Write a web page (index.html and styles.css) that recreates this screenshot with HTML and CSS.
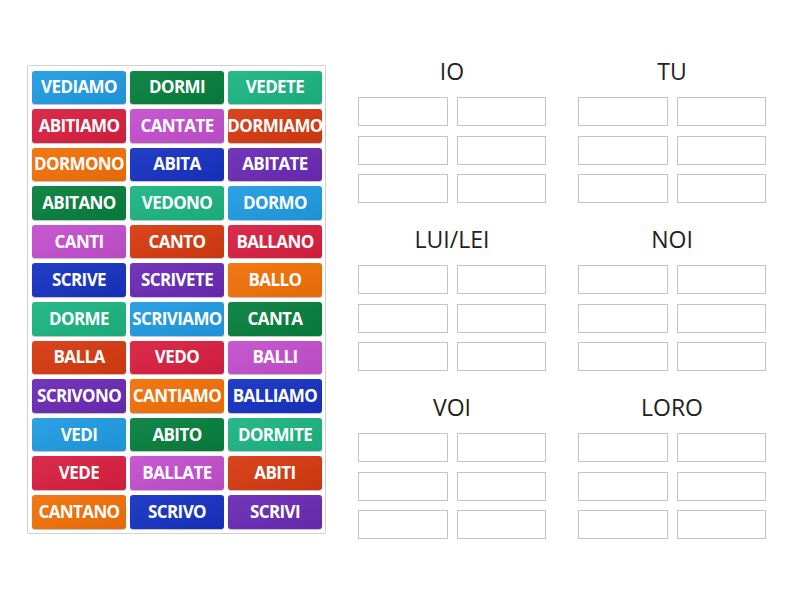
FILE: index.html
```html
<!DOCTYPE html>
<html lang="it">

<head>
    <meta charset="UTF-8">
    <meta name="viewport" content="width=device-width, initial-scale=1.0">
    <title>Raggruppa i verbi</title>
    <link rel="stylesheet" href="styles.css">
</head>

<body>

    <main class="activity">

        <!-- Word bank -->
        <section class="word-bank">
            <div class="tile blue">VEDIAMO</div>
            <div class="tile green">DORMI</div>
            <div class="tile teal">VEDETE</div>

            <div class="tile red">ABITIAMO</div>
            <div class="tile orchid">CANTATE</div>
            <div class="tile rust">DORMIAMO</div>

            <div class="tile orange">DORMONO</div>
            <div class="tile royal">ABITA</div>
            <div class="tile purple">ABITATE</div>

            <div class="tile green">ABITANO</div>
            <div class="tile teal">VEDONO</div>
            <div class="tile blue">DORMO</div>

            <div class="tile orchid">CANTI</div>
            <div class="tile rust">CANTO</div>
            <div class="tile red">BALLANO</div>

            <div class="tile royal">SCRIVE</div>
            <div class="tile purple">SCRIVETE</div>
            <div class="tile orange">BALLO</div>

            <div class="tile teal">DORME</div>
            <div class="tile blue">SCRIVIAMO</div>
            <div class="tile green">CANTA</div>

            <div class="tile rust">BALLA</div>
            <div class="tile red">VEDO</div>
            <div class="tile orchid">BALLI</div>

            <div class="tile purple">SCRIVONO</div>
            <div class="tile orange">CANTIAMO</div>
            <div class="tile royal">BALLIAMO</div>

            <div class="tile blue">VEDI</div>
            <div class="tile green">ABITO</div>
            <div class="tile teal">DORMITE</div>

            <div class="tile red">VEDE</div>
            <div class="tile orchid">BALLATE</div>
            <div class="tile rust">ABITI</div>

            <div class="tile orange">CANTANO</div>
            <div class="tile royal">SCRIVO</div>
            <div class="tile purple">SCRIVI</div>
        </section>

        <!-- Groups -->
        <section class="groups">
            <div class="group">
                <h2>IO</h2>
                <div class="slots">
                    <div class="slot"></div><div class="slot"></div>
                    <div class="slot"></div><div class="slot"></div>
                    <div class="slot"></div><div class="slot"></div>
                </div>
            </div>
            <div class="group">
                <h2>TU</h2>
                <div class="slots">
                    <div class="slot"></div><div class="slot"></div>
                    <div class="slot"></div><div class="slot"></div>
                    <div class="slot"></div><div class="slot"></div>
                </div>
            </div>
            <div class="group">
                <h2>LUI/LEI</h2>
                <div class="slots">
                    <div class="slot"></div><div class="slot"></div>
                    <div class="slot"></div><div class="slot"></div>
                    <div class="slot"></div><div class="slot"></div>
                </div>
            </div>
            <div class="group">
                <h2>NOI</h2>
                <div class="slots">
                    <div class="slot"></div><div class="slot"></div>
                    <div class="slot"></div><div class="slot"></div>
                    <div class="slot"></div><div class="slot"></div>
                </div>
            </div>
            <div class="group">
                <h2>VOI</h2>
                <div class="slots">
                    <div class="slot"></div><div class="slot"></div>
                    <div class="slot"></div><div class="slot"></div>
                    <div class="slot"></div><div class="slot"></div>
                </div>
            </div>
            <div class="group">
                <h2>LORO</h2>
                <div class="slots">
                    <div class="slot"></div><div class="slot"></div>
                    <div class="slot"></div><div class="slot"></div>
                    <div class="slot"></div><div class="slot"></div>
                </div>
            </div>
        </section>

    </main>

</body>

</html>
```

FILE: styles.css
```css
/* General Reset */
* {
    margin: 0;
    padding: 0;
    box-sizing: border-box;
}

body {
    background-color: #fff;
    color: #222;
    font-family: "Open Sans", "Liberation Sans", sans-serif;
}

/* Page layout */
.activity {
    display: flex;
    align-items: flex-start;
    gap: 32px;
    padding: 57px 0 0 27px;
}

/* Word bank */
.word-bank {
    margin-top: 8px;
    display: grid;
    grid-template-columns: repeat(3, 94px);
    grid-auto-rows: 33.6px;
    gap: 5px 4px;
    padding: 4.5px 3px 4.5px 4px;
    border: 1px solid #d0d0d0;
    border-radius: 2px;
}

.tile {
    display: flex;
    align-items: center;
    justify-content: center;
    padding-bottom: 1px;
    white-space: nowrap;
    color: #fff;
    font-size: 17px;
    font-weight: bold;
    letter-spacing: -0.6px;
    border-radius: 3px;
    box-shadow: 0 1px 1px rgba(0, 0, 0, 0.25);
    background-image: linear-gradient(160deg, rgba(255, 255, 255, 0.06), rgba(0, 0, 0, 0.06));
}

.blue   { background-color: #1f9be2; }
.green  { background-color: #067f3d; }
.teal   { background-color: #1cb582; }
.red    { background-color: #d91f40; }
.orchid { background-color: #c34fce; }
.rust   { background-color: #d63a10; }
.orange { background-color: #f27007; }
.royal  { background-color: #1632c2; }
.purple { background-color: #6a2bb5; }

/* Groups */
.groups {
    display: grid;
    grid-template-columns: repeat(2, 188px);
    column-gap: 32px;
    row-gap: 22px;
}

.group h2 {
    text-align: center;
    font-size: 23px;
    font-weight: normal;
    line-height: 28px;
    margin-bottom: 12px;
    color: #222;
}

.slots {
    display: grid;
    grid-template-columns: repeat(2, 1fr);
    grid-auto-rows: 29px;
    gap: 9.5px 9px;
}

.slot {
    border: 1px solid #c4c4c4;
}
```
